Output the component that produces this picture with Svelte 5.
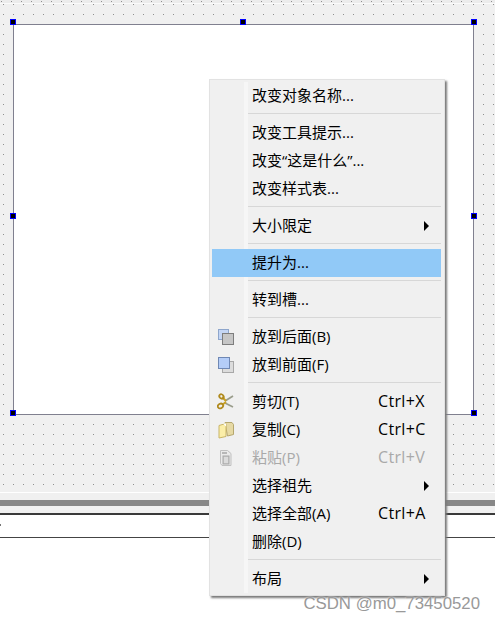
<script>
	// type: item | sep; icon names match the svg blocks below
	const menu = [
		{ label: '改变对象名称...' },
		{ sep: true },
		{ label: '改变工具提示...' },
		{ label: '改变“这是什么”...' },
		{ label: '改变样式表...' },
		{ sep: true },
		{ label: '大小限定', arrow: true },
		{ sep: true },
		{ label: '提升为...', active: true },
		{ sep: true },
		{ label: '转到槽...' },
		{ sep: true },
		{ label: '放到后面(B)', icon: 'back' },
		{ label: '放到前面(F)', icon: 'front' },
		{ sep: true },
		{ label: '剪切(T)', icon: 'cut', key: 'Ctrl+X' },
		{ label: '复制(C)', icon: 'copy', key: 'Ctrl+C' },
		{ label: '粘贴(P)', icon: 'paste', key: 'Ctrl+V', disabled: true },
		{ label: '选择祖先', arrow: true },
		{ label: '选择全部(A)', key: 'Ctrl+A' },
		{ label: '删除(D)' },
		{ sep: true },
		{ label: '布局', arrow: true }
	];

	const handles = [
		['left', 'top'], ['mid', 'top'], ['right', 'top'],
		['left', 'center'], ['right', 'center'],
		['left', 'bottom'], ['mid', 'bottom'], ['right', 'bottom']
	];
</script>

<div class="designer">
	<div class="strip"></div>
	<div class="canvas">
		<div class="form">
			{#each handles as [h, v]}
				<span class="handle {h} {v}"></span>
			{/each}
		</div>
	</div>
	<div class="splitter"></div>
	<div class="panel">
		<div class="panel-head"><span class="tick"></span></div>
		<div class="panel-body"></div>
	</div>

	<div class="menu">
		{#each menu as item}
			{#if item.sep}
				<div class="sep"></div>
			{:else}
				<div class="row" class:active={item.active} class:disabled={item.disabled}>
					<span class="gutter">
						{#if item.icon === 'back'}
							<svg width="18" height="18" viewBox="0 0 18 18">
								<rect x="1.5" y="1.5" width="10" height="10" fill="#c4d6f5" stroke="#8ea6cc" />
								<rect x="5.5" y="5.5" width="11" height="11" fill="#c6c6c6" stroke="#7d7d7d" />
							</svg>
						{:else if item.icon === 'front'}
							<svg width="18" height="18" viewBox="0 0 18 18">
								<rect x="5.5" y="5.5" width="11" height="11" fill="#dcdcdc" stroke="#a8a8a8" />
								<rect x="1.5" y="1.5" width="11" height="11" fill="#b4cdf8" stroke="#6f88b4" />
							</svg>
						{:else if item.icon === 'cut'}
							<svg width="18" height="18" viewBox="0 0 18 18" fill="none">
								<path d="M7 9.5 16 14M8 8l8-5" stroke="#9a9d8c" stroke-width="1.8" />
								<path d="M9 8 5 4M9 9l-4 3" stroke="#c9a227" stroke-width="2" />
								<ellipse cx="4.5" cy="3.5" rx="2.4" ry="2" stroke="#b08a1e" stroke-width="1.8" transform="rotate(50 4.5 3.5)" />
								<ellipse cx="3.5" cy="13" rx="2.8" ry="2.2" stroke="#b08a1e" stroke-width="1.8" transform="rotate(-30 3.5 13)" />
							</svg>
						{:else if item.icon === 'copy'}
							<svg width="18" height="18" viewBox="0 0 18 18">
								<path d="M8 1.5h7l1.5 2v10l-6 1.5z" fill="#e6d9a4" stroke="#b5a76e" />
								<path d="M2 4.5 9 2.5v13l-7 1.5z" fill="#fbeea8" stroke="#c9b568" />
								<path d="M6 2.5h3v3z" fill="#fff" />
							</svg>
						{:else if item.icon === 'paste'}
							<svg width="18" height="18" viewBox="0 0 18 18">
								<path d="M3.5 1.5h7l3.5 3v12h-9l-1.5-2z" fill="#e9e9e9" stroke="#b0b0b0" />
								<rect x="6" y="7" width="6" height="8" fill="#bdbdbd" stroke="#8f8f8f" />
								<path d="M7 9h4M7 11h4M7 13h4" stroke="#ececec" />
								<rect x="5" y="3" width="5" height="2" fill="#a5a5a5" />
							</svg>
						{/if}
					</span>
					<span class="label">{item.label}</span>
					{#if item.key}<span class="key">{item.key}</span>{/if}
					{#if item.arrow}<span class="arrow"></span>{/if}
				</div>
			{/if}
		{/each}
	</div>

	<div class="watermark">CSDN @m0_73450520</div>
</div>

<style>
	:global(body) {
		margin: 0;
		background: #fff;
	}

	.designer {
		position: relative;
		width: 495px;
		height: 622px;
		overflow: hidden;
		font-family: 'Open Sans', 'Noto Sans CJK SC', sans-serif;
	}

	.strip {
		box-sizing: border-box;
		height: 4px;
		background-color: #ececec;
		background-image: radial-gradient(circle at 1.5px 1.5px, #8f8f8f 0.6px, transparent 0.9px);
		background-size: 10px 10px;
		border-bottom: 1px solid #fafafa;
	}

	.canvas {
		box-sizing: border-box;
		height: 488px;
		padding: 20px 21px 0 13px;
		background-color: #f0f0f0;
		background-image: radial-gradient(circle at 3.5px 0.5px, #8f8f8f 0.6px, transparent 0.9px);
		background-size: 10px 10px;
	}

	.form {
		position: relative;
		box-sizing: border-box;
		width: 461px;
		height: 391px;
		background: #fff;
		border: 1px solid #80808f;
	}

	.handle {
		position: absolute;
		box-sizing: border-box;
		width: 6px;
		height: 6px;
		background: #000;
		border: 1px solid #0000ff;
	}

	.handle.left { left: -4px; }
	.handle.mid { left: 226px; }
	.handle.right { right: -4px; }
	.handle.top { top: -6px; }
	.handle.center { top: 188px; }
	.handle.bottom { bottom: -2px; }

	.splitter {
		height: 21px;
		border-top: 1px solid #fff;
		box-sizing: border-box;
		background: linear-gradient(#f0f0f0 7px, #878787 7px, #878787 13px, #f0f0f0 13px);
	}

	.panel {
		background: #fff;
	}

	.panel-head {
		position: relative;
		box-sizing: border-box;
		height: 25px;
		border-top: 2px solid #3a3a3a;
		border-bottom: 1px solid #444;
	}

	.tick {
		position: absolute;
		left: 0;
		top: 9px;
		width: 1px;
		height: 2px;
		background: #777;
	}

	.menu {
		position: absolute;
		left: 209px;
		top: 79px;
		box-sizing: border-box;
		width: 236px;
		padding: 2px 3px 2px 2px;
		background: #f0f0f0;
		border: 1px solid #e2e2e2;
		box-shadow: 2px 2px 2px #7a7a7a;
	}

	.menu::before {
		content: '';
		position: absolute;
		left: 34px;
		top: 2px;
		bottom: 2px;
		width: 4px;
		background: #f6f6f6;
	}

	.row {
		position: relative;
		display: flex;
		align-items: center;
		height: 28px;
		font-size: 15px;
		line-height: 28px;
		color: #000;
	}

	.row.active {
		background: #91c9f7;
	}

	.row.disabled {
		color: #a9a9a9;
	}

	.row.disabled svg {
		opacity: 0.75;
	}

	.gutter {
		display: flex;
		align-items: center;
		justify-content: center;
		flex: none;
		width: 28px;
		margin-right: 12px;
	}

	.label {
		white-space: nowrap;
		margin-top: -2px;
	}

	.key {
		position: absolute;
		left: 166px;
		margin-top: -2px;
		font-size: 16px;
		letter-spacing: 0.35px;
	}

	.arrow {
		position: absolute;
		left: 212px;
		top: 9px;
		border-left: 5px solid #000;
		border-top: 5px solid transparent;
		border-bottom: 5px solid transparent;
	}

	.sep {
		height: 1px;
		margin: 3px 0 5px 36px;
		background: #d7d7d7;
	}

	.watermark {
		position: absolute;
		right: 15px;
		bottom: 8px;
		font-family: 'Liberation Sans', sans-serif;
		font-size: 16.8px;
		color: #999;
		text-shadow: 0 0 2px #fff;
	}
</style>
